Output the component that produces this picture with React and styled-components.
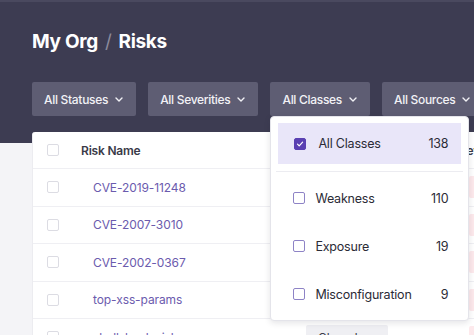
import React from "react";
import styled, { createGlobalStyle } from "styled-components";

const Global = createGlobalStyle`
  html, body { margin: 0; padding: 0; }
  body {
    background: #f4f4f7;
    font-family: Inter, "Noto Sans", sans-serif;
    overflow: hidden;
    width: 474px;
    height: 335px;
  }
`;

const Page = styled.div`
  width: 474px;
  height: 335px;
  overflow: hidden;
  position: relative;
`;

const Header = styled.header`
  background: #3d3c52;
  border-top: 2px solid #4a495f;
  padding: 28px 0 27px 32px;
  display: flex;
  flex-direction: column;
  gap: 28px;
`;

const Title = styled.h1`
  margin: 0;
  font-size: 19px;
  line-height: 24px;
  font-weight: 700;
  color: #ffffff;
  display: flex;
  align-items: center;
  gap: 7px;
  letter-spacing: -0.3px;
`;

const Slash = styled.span`
  color: #8b8a9c;
  font-weight: 400;
`;

const Filters = styled.div`
  display: flex;
  gap: 12px;
  white-space: nowrap;
`;

const FilterWrap = styled.div`
  position: relative;
  flex: none;
`;

const FilterButton = styled.button`
  height: 34px;
  border: none;
  border-radius: 2px;
  background: #5e5d73;
  color: #f2f2f6;
  font-family: inherit;
  font-size: 12px;
  letter-spacing: -0.3px;
  font-weight: 500;
  padding: 0 13px 0 12px;
  display: flex;
  align-items: center;
  gap: 7px;
  cursor: pointer;
`;

const Chevron = () => (
  <svg width="8" height="5" viewBox="0 0 8 5" fill="none">
    <path d="M1 1l3 3 3-3" stroke="#f2f2f6" strokeWidth="1.4" strokeLinecap="round" strokeLinejoin="round" />
  </svg>
);

const Menu = styled.div`
  position: absolute;
  top: 34px;
  left: 0;
  width: 199px;
  height: 205px;
  box-sizing: border-box;
  background: #ffffff;
  border: 1px solid #e4e4ea;
  border-radius: 4px;
  box-shadow: 0 2px 6px rgba(30, 30, 50, 0.12);
  padding: 6px 0 0;
  z-index: 10;
`;

const MenuItem = styled.div`
  display: flex;
  align-items: center;
  box-sizing: border-box;
  font-size: 12.5px;
  letter-spacing: -0.2px;
  color: #2b2b36;
  ${(p) =>
    p.$selected
      ? `
    margin: 0 7px;
    height: 41px;
    background: #e9e6f9;
    padding: 0 13px 0 16px;
    gap: 12px;
  `
      : `
    height: 48px;
    padding: 0 20px 0 22px;
    gap: 10px;
  `}
`;

const ItemLabel = styled.span`
  flex: 1;
`;

const Count = styled.span`
  color: #2b2b36;
`;

const Divider = styled.div`
  height: 1px;
  background: #ececf1;
  margin: 7px 5px 2px;
`;

const Box = styled.span`
  flex: none;
  width: 12px;
  height: 12px;
  box-sizing: border-box;
  border-radius: 2px;
  display: inline-flex;
  align-items: center;
  justify-content: center;
  ${(p) =>
    p.$checked
      ? `background: #5a40b2; border: 1px solid #5a40b2;`
      : `background: #fff; border: 1.5px solid #8e83c6;`}
`;

const CheckBox = ({ checked }) => (
  <Box $checked={checked}>
    {checked && (
      <svg width="8" height="8" viewBox="0 0 8 8" fill="none">
        <path d="M1.5 4.2l1.7 1.7L6.6 2.2" stroke="#fff" strokeWidth="1.2" strokeLinecap="round" strokeLinejoin="round" />
      </svg>
    )}
  </Box>
);

const Card = styled.div`
  margin: -11px 0 0 32px;
  width: 620px;
  background: #ffffff;
  border-left: 1px solid #ececf0;
  border-top-left-radius: 3px;
`;

const Row = styled.div`
  display: grid;
  grid-template-columns: 48px 225px 153px 120px;
  align-items: center;
  height: ${(p) => (p.$head ? "37px" : "37.5px")};
  border-bottom: 1px solid #efeff3;
  box-sizing: border-box;
`;

const Cell = styled.div`
  display: flex;
  align-items: center;
  white-space: nowrap;
  padding-left: ${(p) => p.$pad || 0}px;
`;

const TableBox = styled.span`
  width: 12px;
  height: 12px;
  box-sizing: border-box;
  border: 1px solid #dcdce3;
  border-radius: 2px;
  background: #fff;
`;

const HeadText = styled.span`
  font-size: 12px;
  letter-spacing: -0.2px;
  font-weight: 600;
  color: #3a3a48;
`;

const NameLink = styled.span`
  font-size: 12px;
  letter-spacing: -0.1px;
  color: #6b5bae;
`;

const StatusPill = styled.span`
  display: inline-flex;
  align-items: center;
  height: 24px;
  width: 82px;
  padding-left: 12px;
  box-sizing: border-box;
  background: #efeff3;
  border-radius: 2px;
  font-size: 12px;
  color: #3a3a48;
`;

const SeverityBadge = styled.span`
  display: inline-block;
  margin-left: 10px;
  width: 70px;
  height: 22px;
  background: #fde9ec;
  border-radius: 2px;
`;

const filters = ["All Statuses", "All Severities", "All Classes", "All Sources"];
const classes = [
  { label: "Weakness", count: 110 },
  { label: "Exposure", count: 19 },
  { label: "Misconfiguration", count: 9 },
];
const risks = ["CVE-2019-11248", "CVE-2007-3010", "CVE-2002-0367", "top-xss-params", "shellshock-risk"];

export default function App() {
  return (
    <Page>
      <Global />
      <Header>
        <Title>
          <span>My Org</span>
          <Slash>/</Slash>
          <span>Risks</span>
        </Title>
        <Filters>
          {filters.map((f) => (
            <FilterWrap key={f}>
              <FilterButton>
                {f}
                <Chevron />
              </FilterButton>
              {f === "All Classes" && (
                <Menu>
                  <MenuItem $selected>
                    <CheckBox checked />
                    <ItemLabel>All Classes</ItemLabel>
                    <Count>138</Count>
                  </MenuItem>
                  <Divider />
                  {classes.map((c) => (
                    <MenuItem key={c.label}>
                      <CheckBox />
                      <ItemLabel>{c.label}</ItemLabel>
                      <Count>{c.count}</Count>
                    </MenuItem>
                  ))}
                </Menu>
              )}
            </FilterWrap>
          ))}
        </Filters>
      </Header>
      <Card>
        <Row $head>
          <Cell $pad={14}>
            <TableBox />
          </Cell>
          <Cell>
            <HeadText>Risk Name</HeadText>
          </Cell>
          <Cell>
            <HeadText>Status</HeadText>
          </Cell>
          <Cell>
            <HeadText>Severity</HeadText>
          </Cell>
        </Row>
        {risks.map((r) => (
          <Row key={r}>
            <Cell $pad={14}>
              <TableBox />
            </Cell>
            <Cell $pad={12}>
              <NameLink>{r}</NameLink>
            </Cell>
            <Cell>
              <StatusPill>Closed</StatusPill>
            </Cell>
            <Cell>
              <SeverityBadge />
            </Cell>
          </Row>
        ))}
      </Card>
    </Page>
  );
}
